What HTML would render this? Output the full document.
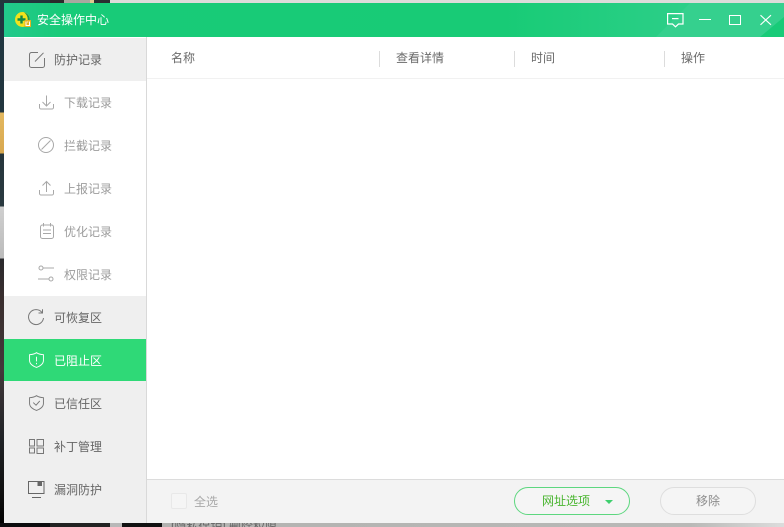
<!DOCTYPE html>
<html lang="zh"><head><meta charset="utf-8"><style>
*{margin:0;padding:0;box-sizing:border-box}
html,body{width:784px;height:527px;overflow:hidden;background:#b5b5b3;font-family:"Liberation Sans","Noto Sans CJK SC","WenQuanYi Zen Hei",sans-serif}
.a{position:absolute}
.t{position:absolute;font-size:12px;line-height:16px;white-space:nowrap}
svg{position:absolute;overflow:visible;fill:none}
</style></head><body>
<!-- backdrop -->
<div class="a" style="left:0;top:0;width:4px;height:527px;background:linear-gradient(#1f3540 0,#22363f 112px,#e3b860 113px,#d8a850 153px,#26363c 154px,#2a3a40 206px,#cfcfcf 207px,#bbb 258px,#2a2a2d 259px,#3a2e2e 300px,#42383a 370px,#1f2226 440px,#111 490px,#000 527px)"></div>
<div class="a" style="left:0;top:0;width:50px;height:3px;background:#23353c"></div>
<div class="a" style="left:50px;top:0;width:14px;height:3px;background:#2a2a2a"></div>
<div class="a" style="left:64px;top:0;width:26px;height:3px;background:#a8a8a0"></div>
<div class="a" style="left:90px;top:0;width:4px;height:3px;background:#e0c890"></div>
<div class="a" style="left:94px;top:0;width:16px;height:3px;background:#2a2c30"></div>
<div class="a" style="left:110px;top:0;width:674px;height:3px;background:#dcdcda"></div>
<div class="a" style="left:0;top:523px;width:110px;height:4px;background:#0c0c0e"></div>
<div class="a" style="left:50px;top:523px;width:60px;height:4px;background:#222"></div>
<div class="a" style="left:110px;top:523px;width:12px;height:4px;background:#b8b8b8"></div>
<div class="a" style="left:122px;top:523px;width:40px;height:4px;background:#111"></div>
<div class="a" style="left:162px;top:523px;width:622px;height:4px;background:linear-gradient(90deg,#b2b2b0,#b9b9b7 85%,#dcdcdc)"></div>
<div class="t" style="left:171px;top:520px;color:#666;font-size:12px;height:7px;overflow:hidden;line-height:14px;clip-path:inset(3px 0 0 0)">[隐私保护] 删除权限</div>

<!-- window -->
<div class="a" style="left:4px;top:3px;width:780px;height:520px;background:#fff"></div>
<div class="a" style="left:4px;top:3px;width:780px;height:34px;background:linear-gradient(90deg,#22c98c 0,#18cb78 60px,#18cb76 500px,#2ccf88 680px)"></div>
<svg style="left:0;top:0" width="784" height="37" viewBox="0 0 784 37">
<path d="M690 3H784V17L760 37H656Z" fill="#35d08e"/>
<path d="M784 17V37H760Z" fill="#18cb78"/>
</svg>

<!-- logo -->
<svg style="left:15px;top:12px" width="16" height="16" viewBox="0 0 16 16">
<circle cx="7.500" cy="7.500" r="7.500" fill="#f1e21c"/>
<path d="M9 .2A7.500 7.500 0 0 1 9 14.800 9 9 0 0 0 9 .2Z" fill="#159a55"/>
<path d="M6.500 3.500v8M2.500 7.500h8" stroke="#0f8a45" stroke-width="2.400"/>
<rect x="9.500" y="8" width="6.500" height="7" fill="#e8b21e"/>
<path d="M11 9.500v4h3.500v-4M12.700 9.500v1" stroke="#fff" stroke-width="1"/>
</svg>
<div class="t" style="left:37px;top:12px;color:#fff">安全操作中心</div>

<!-- window controls -->
<svg style="left:667px;top:13px" width="20" height="15" viewBox="0 0 20 15" stroke="#fff" stroke-width="1.200">
<path d="M.6.600h15.400v10.400h-4.500l-3 2.800-3-2.800H.6Z"/><path d="M5 5.600h6.500"/></svg>
<div class="a" style="left:699px;top:19px;width:12px;height:1px;background:#fff"></div>
<div class="a" style="left:729px;top:15px;width:12px;height:10px;border:1px solid #fff"></div>
<svg style="left:760px;top:15px" width="12" height="10" viewBox="0 0 12 10" stroke="#fff" stroke-width="1.100"><path d="M.500.200l10.500 9.600M11 .200L.500 9.800"/></svg>

<!-- sidebar -->
<div class="a" style="left:4px;top:37px;width:142px;height:486px;background:#efefef"></div>
<div class="a" style="left:4px;top:37px;width:142px;height:1px;background:#fff"></div>
<div class="a" style="left:4px;top:81px;width:142px;height:215px;background:#fff"></div>
<div class="a" style="left:4px;top:339px;width:142px;height:42px;background:#2fd977"></div>
<div class="a" style="left:146px;top:37px;width:1px;height:486px;background:#d9d9d9"></div>

<div class="t" style="left:54px;top:52px;color:#666">防护记录</div>
<div class="t" style="left:64px;top:95px;color:#9c9c9c">下载记录</div>
<div class="t" style="left:64px;top:138px;color:#9c9c9c">拦截记录</div>
<div class="t" style="left:64px;top:181px;color:#9c9c9c">上报记录</div>
<div class="t" style="left:64px;top:224px;color:#9c9c9c">优化记录</div>
<div class="t" style="left:64px;top:267px;color:#9c9c9c">权限记录</div>
<div class="t" style="left:54px;top:310px;color:#666">可恢复区</div>
<div class="t" style="left:54px;top:353px;color:#fff">已阻止区</div>
<div class="t" style="left:54px;top:396px;color:#666">已信任区</div>
<div class="t" style="left:54px;top:439px;color:#666">补丁管理</div>
<div class="t" style="left:54px;top:482px;color:#666">漏洞防护</div>

<!-- sidebar icons -->
<svg style="left:29px;top:52px" width="16" height="16" viewBox="0 0 16 16" stroke="#777" stroke-width="1">
<path d="M9 .5H2.500a2 2 0 0 0-2 2v11a2 2 0 0 0 2 2h11a2 2 0 0 0 2-2V6"/><path d="M14.500.800L6 9.500"/></svg>
<svg style="left:39px;top:95px" width="15" height="15" viewBox="0 0 15 15" stroke="#a8a8a8" stroke-width="1">
<path d="M7.500.500v10M3.500 7l4 4 4-4"/><path d="M.500 9v3.500a1.500 1.500 0 0 0 1.500 1.500h11a1.500 1.500 0 0 0 1.500-1.500V9"/></svg>
<svg style="left:38px;top:137px" width="16" height="16" viewBox="0 0 16 16" stroke="#a8a8a8" stroke-width="1">
<circle cx="8" cy="8" r="7.500"/><path d="M12.500 3.500L3.500 12.500"/></svg>
<svg style="left:39px;top:181px" width="15" height="15" viewBox="0 0 15 15" stroke="#a8a8a8" stroke-width="1">
<path d="M7.500 11V.800M3.500 4.500l4-4 4 4"/><path d="M.500 9v3.500a1.500 1.500 0 0 0 1.500 1.500h11a1.500 1.500 0 0 0 1.500-1.500V9"/></svg>
<svg style="left:40px;top:223px" width="14" height="16" viewBox="0 0 14 16" stroke="#a8a8a8" stroke-width="1">
<rect x=".5" y="2" width="13" height="13.500" rx="2"/><path d="M3.500 0v3.500M10.500 0v3.500M3 7h8M3 10.500h8"/></svg>
<svg style="left:38px;top:265px" width="16" height="17" viewBox="0 0 16 17" stroke="#a8a8a8" stroke-width="1">
<circle cx="3" cy="3" r="2"/><path d="M5 3h11M0 14h11"/><circle cx="13" cy="14" r="2"/></svg>
<svg style="left:28px;top:309px" width="16" height="16" viewBox="0 0 16 16" stroke="#777" stroke-width="1">
<path d="M14 3.500A7.500 7.500 0 1 0 15.500 9"/><path d="M14.500.300v3.700H10.500"/></svg>
<svg style="left:29px;top:352px" width="15" height="16" viewBox="0 0 16 17" stroke="#fff" stroke-width="1">
<path d="M8 .700C6 2 3 2.800.600 2.800V9c0 3.500 3.500 6.200 7.400 7.400 3.900-1.200 7.400-3.900 7.400-7.400V2.800C13 2.800 10 2 8 .700Z"/><path d="M8 5v5M8 11.500v1.500"/></svg>
<svg style="left:29px;top:395px" width="15" height="16" viewBox="0 0 16 17" stroke="#777" stroke-width="1">
<path d="M8 .700C6 2 3 2.800.600 2.800V9c0 3.500 3.500 6.200 7.400 7.400 3.900-1.200 7.400-3.900 7.400-7.400V2.800C13 2.800 10 2 8 .700Z"/><path d="M4.500 8l3 2.800 4-4.500"/></svg>
<svg style="left:29px;top:439px" width="15" height="15" viewBox="0 0 15 15" stroke="#777" stroke-width="1">
<rect x=".5" y=".5" width="5" height="6.500"/><rect x="8" y=".5" width="6.500" height="6.500"/><rect x=".5" y="9" width="5" height="5"/><rect x="8" y="9" width="6.500" height="5.500"/></svg>
<svg style="left:28px;top:481px" width="17" height="17" viewBox="0 0 17 17" stroke="#666" stroke-width="1">
<path d="M.5.500h15.500v12H.500Z"/><path d="M4 16.500h9"/><path d="M10 .500v4h3.500v-4" fill="#666"/></svg>

<!-- table head -->
<div class="a" style="left:147px;top:78px;width:637px;height:1px;background:#f1f1f1"></div>
<div class="t" style="left:171px;top:50px;color:#6a6a6a">名称</div>
<div class="t" style="left:396px;top:50px;color:#6a6a6a">查看详情</div>
<div class="t" style="left:531px;top:50px;color:#6a6a6a">时间</div>
<div class="t" style="left:681px;top:50px;color:#6a6a6a">操作</div>
<div class="a" style="left:379px;top:51px;width:1px;height:16px;background:#dcdcdc"></div>
<div class="a" style="left:514px;top:51px;width:1px;height:16px;background:#dcdcdc"></div>
<div class="a" style="left:664px;top:51px;width:1px;height:16px;background:#dcdcdc"></div>

<!-- footer -->
<div class="a" style="left:147px;top:479px;width:637px;height:44px;background:#f3f3f3;border-top:1px solid #dcdcdc"></div>
<div class="a" style="left:171px;top:493px;width:16px;height:16px;background:#f5f5f5;border:1px solid #e8e8e8;border-radius:2px"></div>
<div class="t" style="left:194px;top:494px;color:#a8a8a8">全选</div>
<div class="a" style="left:514px;top:487px;width:116px;height:28px;border:1px solid #5dd77f;border-radius:14px;background:#f5f5f5"></div>
<div class="t" style="left:542px;top:493px;color:#49b52f">网址选项</div>
<div class="a" style="left:605px;top:500px;width:0;height:0;border-left:4px solid transparent;border-right:4px solid transparent;border-top:4px solid #3fcf6e"></div>
<div class="a" style="left:660px;top:487px;width:96px;height:28px;border:1px solid #dedede;border-radius:14px;background:#f5f5f5"></div>
<div class="t" style="left:696px;top:493px;color:#8c8c8c">移除</div>
</body></html>
